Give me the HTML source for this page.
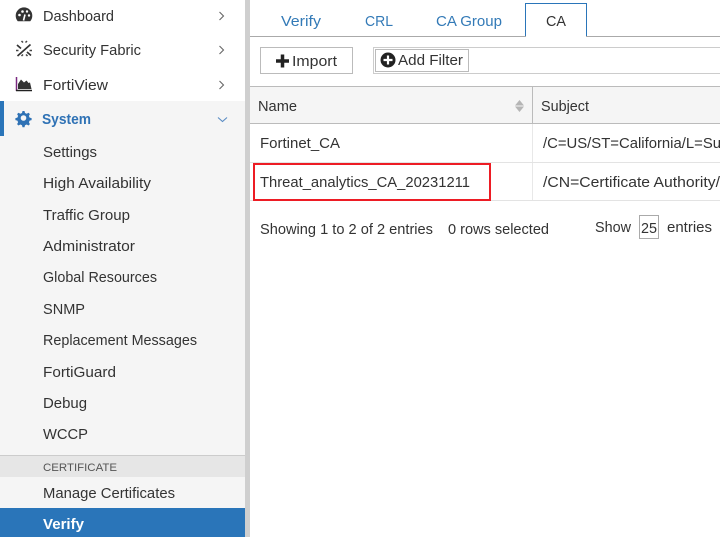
<!DOCTYPE html>
<html><head><meta charset="utf-8"><style>
html,body{margin:0;padding:0;background:#fff;width:720px;height:537px;overflow:hidden}
svg{display:block}
text{font-family:"Liberation Sans",sans-serif;font-size:15px;fill:#333}
.b{font-weight:bold}
.t{fill:#337ab7}
</style></head><body>
<svg width="720" height="537" viewBox="0 0 720 537" xmlns="http://www.w3.org/2000/svg">
<rect x="0" y="0" width="245" height="101" fill="#fff"/>
<rect x="0" y="101" width="245" height="436" fill="#f5f5f5"/>
<rect x="245" y="0" width="5" height="537" fill="#cfcfcf"/>
<rect x="0" y="101" width="4" height="35" fill="#2a75b9"/>
<rect x="0" y="455" width="245" height="22" fill="#e6e6e6"/>
<rect x="0" y="455" width="245" height="1" fill="#ccc"/>
<rect x="0" y="508" width="245" height="29" fill="#2a75b9"/>

<!-- dashboard icon -->
<path d="M18 21a8 8 0 1 1 12 0z" fill="#333" stroke="#333" stroke-width="0.600" stroke-linejoin="round"/>
<circle cx="19.500" cy="15" r="1.300" fill="#fff"/><circle cx="22.500" cy="11.500" r="1.300" fill="#fff"/><circle cx="27" cy="11.500" r="1.200" fill="#fff"/><circle cx="29" cy="15.500" r="1.200" fill="#fff"/>
<path d="M23.500 20.500l1.500-6" stroke="#fff" stroke-width="1.600"/>
<!-- fabric icon -->
<path d="M17 45l4 3.500M27 52l4 3.500M30.500 44.500l-13 11.500" stroke="#333" stroke-width="1.700" fill="none"/>
<path d="M21.500 41l1.500 1.500M27 41l-1.500 1.500M16 50.500h2.500M29.500 50.500h2.500M21.500 56l1.500-1.500M26 54.500l1.500 1.500" stroke="#444" stroke-width="1.500" fill="none"/>
<!-- fortiview icon -->
<path d="M16.500 77v14" stroke="#7a2a80" stroke-width="1.500"/>
<path d="M16 90.500h16" stroke="#222" stroke-width="1.500"/>
<path d="M18 89v-5l3-4.500 3 3 2.500-2 2 2.500 1.500-.5 1.500 6.500z" fill="#333"/>
<!-- gear icon -->
<path d="M23 111.500h2l.5 2 1.700.7 1.800-1 1.400 1.400-1 1.800.7 1.700 2 .5v2l-2 .5-.7 1.700 1 1.800-1.400 1.400-1.800-1-1.700.7-.5 2h-2l-.5-2-1.700-.7-1.800 1-1.400-1.400 1-1.800-.7-1.700-2-.5v-2l2-.5.7-1.700-1-1.800 1.400-1.400 1.800 1 1.700-.7z" transform="translate(-.5 -.5)" fill="#2f72b5"/>
<circle cx="23.500" cy="118" r="2.800" fill="#f5f5f5"/>

<text x="43" y="21" textLength="71" lengthAdjust="spacingAndGlyphs">Dashboard</text>
<text x="43" y="55" textLength="98" lengthAdjust="spacingAndGlyphs">Security Fabric</text>
<text x="43" y="90" textLength="65" lengthAdjust="spacingAndGlyphs">FortiView</text>
<text x="42" y="124" class="b" style="fill:#2f72b5" textLength="49" lengthAdjust="spacingAndGlyphs">System</text>
<text x="43" y="157" textLength="54" lengthAdjust="spacingAndGlyphs">Settings</text>
<text x="43" y="188" textLength="108" lengthAdjust="spacingAndGlyphs">High Availability</text>
<text x="43" y="220" textLength="87" lengthAdjust="spacingAndGlyphs">Traffic Group</text>
<text x="43" y="251" textLength="92" lengthAdjust="spacingAndGlyphs">Administrator</text>
<text x="43" y="282" textLength="114" lengthAdjust="spacingAndGlyphs">Global Resources</text>
<text x="43" y="314" textLength="42" lengthAdjust="spacingAndGlyphs">SNMP</text>
<text x="43" y="345" textLength="154" lengthAdjust="spacingAndGlyphs">Replacement Messages</text>
<text x="43" y="377" textLength="73" lengthAdjust="spacingAndGlyphs">FortiGuard</text>
<text x="43" y="408" textLength="44" lengthAdjust="spacingAndGlyphs">Debug</text>
<text x="43" y="439" textLength="45" lengthAdjust="spacingAndGlyphs">WCCP</text>
<text x="43" y="471" style="font-size:11px;fill:#555" textLength="74" lengthAdjust="spacingAndGlyphs">CERTIFICATE</text>
<text x="43" y="498" textLength="132" lengthAdjust="spacingAndGlyphs">Manage Certificates</text>
<text x="43" y="529" class="b" style="fill:#fff" textLength="41" lengthAdjust="spacingAndGlyphs">Verify</text>

<g fill="none" stroke="#666" stroke-width="1.100">
<path d="M219.500 12l4 4-4 4M219.500 46l4 4-4 4M219.500 81l4 4-4 4"/>
<path d="M218 117.500l4.500 4 4.500-4" stroke="#5a8cc4"/>
</g>

<!-- tabs -->
<path d="M250 36.500H525.500V3.500H586.500V36.500H720" fill="none" stroke="#aaa"/>
<path d="M525.500 36V3.500H586.500V36" fill="none" stroke="#2a75b9"/>
<text x="281" y="26" class="t" textLength="40" lengthAdjust="spacingAndGlyphs">Verify</text>
<text x="365" y="26" class="t" textLength="28" lengthAdjust="spacingAndGlyphs">CRL</text>
<text x="436" y="26" class="t" textLength="66" lengthAdjust="spacingAndGlyphs">CA Group</text>
<text x="546" y="26" textLength="20" lengthAdjust="spacingAndGlyphs">CA</text>

<!-- toolbar -->
<rect x="260.500" y="47.500" width="92" height="26" fill="#fff" stroke="#bbb"/>
<path d="M276 61h13M282.500 54.500v13" stroke="#222" stroke-width="3.500"/>
<text x="292" y="66" textLength="45" lengthAdjust="spacingAndGlyphs">Import</text>
<path d="M720 47.500H373.500V73.500H720" fill="#fff" stroke="#ccc"/>
<rect x="375.500" y="49.500" width="93" height="22" fill="#fff" stroke="#bbb"/>
<circle cx="388" cy="60" r="7.500" fill="#222"/>
<path d="M383.500 60h9M388 55.500v9" stroke="#fff" stroke-width="2.200"/>
<text x="398" y="65" textLength="65" lengthAdjust="spacingAndGlyphs">Add Filter</text>

<!-- table -->
<rect x="250" y="86" width="470" height="38" fill="#f5f5f5"/>
<rect x="250" y="86" width="470" height="1" fill="#bbb"/>
<rect x="250" y="123" width="470" height="1" fill="#bbb"/>
<rect x="532" y="87" width="1" height="36" fill="#bbb"/>
<rect x="532" y="124" width="1" height="76" fill="#e8e8e8"/>
<rect x="250" y="162" width="470" height="1" fill="#e3e3e3"/>
<rect x="250" y="200" width="470" height="1" fill="#e3e3e3"/>
<text x="258" y="111" textLength="39" lengthAdjust="spacingAndGlyphs">Name</text>
<text x="541" y="111" textLength="48" lengthAdjust="spacingAndGlyphs">Subject</text>
<path d="M515 105.500l4.500-5.500 4.500 5.500zM515 106.500l4.500 5.500 4.500-5.500z" fill="#b5b5b5"/>
<text x="260" y="148" textLength="80" lengthAdjust="spacingAndGlyphs">Fortinet_CA</text>
<text x="260" y="187" textLength="210" lengthAdjust="spacingAndGlyphs">Threat_analytics_CA_20231211</text>
<rect x="254" y="164" width="236" height="36" fill="none" stroke="#ed1c24" stroke-width="2"/>
<text x="543" y="148" textLength="178" lengthAdjust="spacingAndGlyphs">/C=US/ST=California/L=Su</text>
<text x="543" y="187" textLength="177" lengthAdjust="spacingAndGlyphs">/CN=Certificate Authority/</text>

<!-- footer -->
<text x="260" y="234" textLength="173" lengthAdjust="spacingAndGlyphs">Showing 1 to 2 of 2 entries</text>
<text x="448" y="234" textLength="101" lengthAdjust="spacingAndGlyphs">0 rows selected</text>
<text x="595" y="232" textLength="36" lengthAdjust="spacingAndGlyphs">Show</text>
<rect x="639.500" y="215.500" width="19" height="23" fill="#fff" stroke="#aaa"/>
<text x="641" y="233" textLength="16" lengthAdjust="spacingAndGlyphs">25</text>
<text x="667" y="232" textLength="45" lengthAdjust="spacingAndGlyphs">entries</text>
</svg>
</body></html>
